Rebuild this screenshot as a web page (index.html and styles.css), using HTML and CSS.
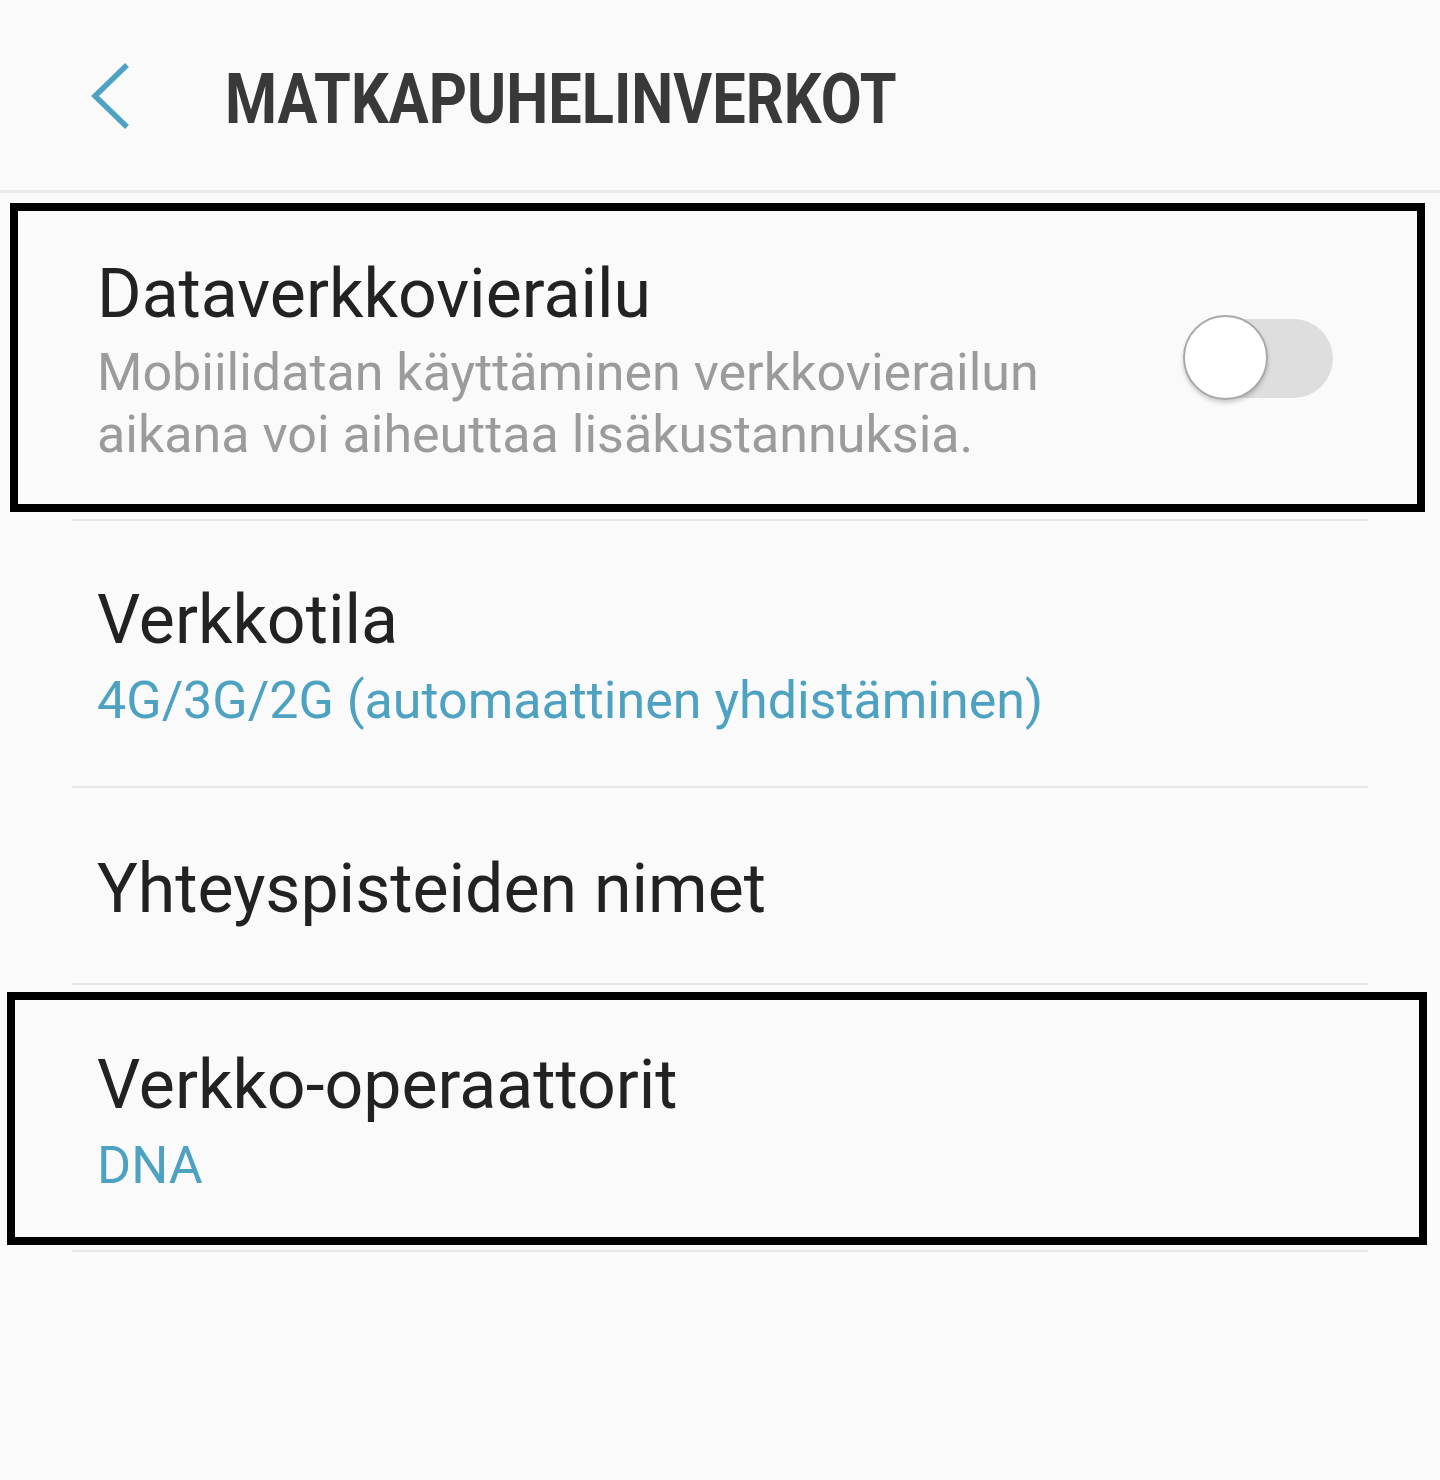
FILE: index.html
```html
<!DOCTYPE html>
<html lang="fi">
<head>
<meta charset="utf-8">
<title>Matkapuhelinverkot</title>
<link rel="stylesheet" href="styles.css">
</head>
<body>
<div class="page">
  <header class="header">
    <div class="back">
      <svg class="back-icon" width="42" height="70" viewBox="0 0 42 70">
        <path d="M37 3 L5 34 L37 65" fill="none" stroke="#4ea3c4" stroke-width="5.5"/>
      </svg>
    </div>
    <h1 class="title"><span class="title-text">MATKAPUHELINVERKOT</span></h1>
  </header>
  <div class="header-divider"></div>

  <div class="highlight highlight-1">
    <div class="item item-roaming">
      <div class="item-text">
        <div class="item-title">Dataverkkovierailu</div>
        <div class="item-sub gray">Mobiilidatan käyttäminen verkkovierailun<br>aikana voi aiheuttaa lisäkustannuksia.</div>
      </div>
      <div class="switch">
        <div class="switch-track"></div>
        <div class="switch-thumb"></div>
      </div>
    </div>
  </div>
  <div class="divider d1"></div>

  <div class="item item-mode">
    <div class="item-title">Verkkotila</div>
    <div class="item-sub blue">4G/3G/2G (automaattinen yhdistäminen)</div>
  </div>
  <div class="divider"></div>

  <div class="item item-apn">
    <div class="item-title">Yhteyspisteiden nimet</div>
  </div>
  <div class="divider"></div>

  <div class="highlight highlight-2">
    <div class="item item-operators">
      <div class="item-title">Verkko-operaattorit</div>
      <div class="item-sub blue">DNA</div>
    </div>
  </div>
  <div class="divider d-last"></div>
</div>
</body>
</html>
```

FILE: styles.css
```css
html, body {
  margin: 0;
  padding: 0;
  background: #fafafa;
}

.page {
  width: 1440px;
  min-height: 1480px;
  background: #fafafa;
  font-family: Roboto, "Noto Sans", "Liberation Sans", sans-serif;
  color: #222222;
}

.header {
  height: 190px;
  display: flex;
  align-items: flex-start;
}

.back {
  width: 135px;
  padding-left: 90px;
  padding-top: 62px;
  box-sizing: content-box;
}

.back-icon {
  display: block;
}

.title {
  margin: 0;
  padding-top: 59px;
  font-size: 70px;
  line-height: 80px;
  font-weight: 700;
  color: #393939;
  white-space: nowrap;
}

.title-text {
  display: inline-block;
  transform: scaleX(0.85);
  transform-origin: left center;
}

.header-divider {
  height: 3px;
  background: #ebebeb;
}

.highlight {
  border: 8px solid #000;
  box-sizing: border-box;
}

.highlight-1 {
  margin: 10px 0 0 10px;
  width: 1415px;
  height: 309px;
}

.highlight-2 {
  margin: 7px 0 0 7px;
  width: 1420px;
  height: 253px;
}

.divider {
  height: 2px;
  margin-left: 72px;
  width: 1296px;
  background: #e6e6e6;
}

.d1 {
  margin-top: 7px;
}

.d-last {
  margin-top: 5px;
}

.item-title {
  font-size: 68px;
  line-height: 80px;
  color: #222222;
  white-space: nowrap;
}

.item-sub {
  font-size: 52px;
  line-height: 62px;
  white-space: nowrap;
}

.gray {
  color: #9b9b9b;
}

.blue {
  color: #4da2c2;
}

.item-roaming {
  height: 100%;
  display: flex;
  align-items: center;
  justify-content: space-between;
  padding-left: 79px;
  box-sizing: border-box;
}

.item-roaming .item-sub {
  margin-top: 8px;
}

.item-roaming .item-text {
  padding-top: 4px;
}

.switch {
  position: relative;
  width: 150px;
  height: 86px;
  margin-right: 84px;
}

.switch-track {
  position: absolute;
  left: 4px;
  right: 0;
  top: 4px;
  height: 79px;
  border-radius: 40px;
  background: #dedede;
}

.switch-thumb {
  position: absolute;
  left: 0;
  top: 0;
  width: 85px;
  height: 85px;
  box-sizing: border-box;
  border-radius: 50%;
  background: #ffffff;
  border: 2px solid #a9a9a9;
  box-shadow: 0 3px 4px rgba(0, 0, 0, 0.18);
}

.item-mode {
  padding: 59px 0 0 97px;
  height: 265px;
  box-sizing: border-box;
}

.item-mode .item-sub {
  margin-top: 10px;
}

.item-apn {
  padding: 61px 0 0 97px;
  height: 195px;
  box-sizing: border-box;
}

.item-operators {
  padding: 45px 0 0 82px;
}

.item-operators .item-sub {
  margin-top: 10px;
}
```
